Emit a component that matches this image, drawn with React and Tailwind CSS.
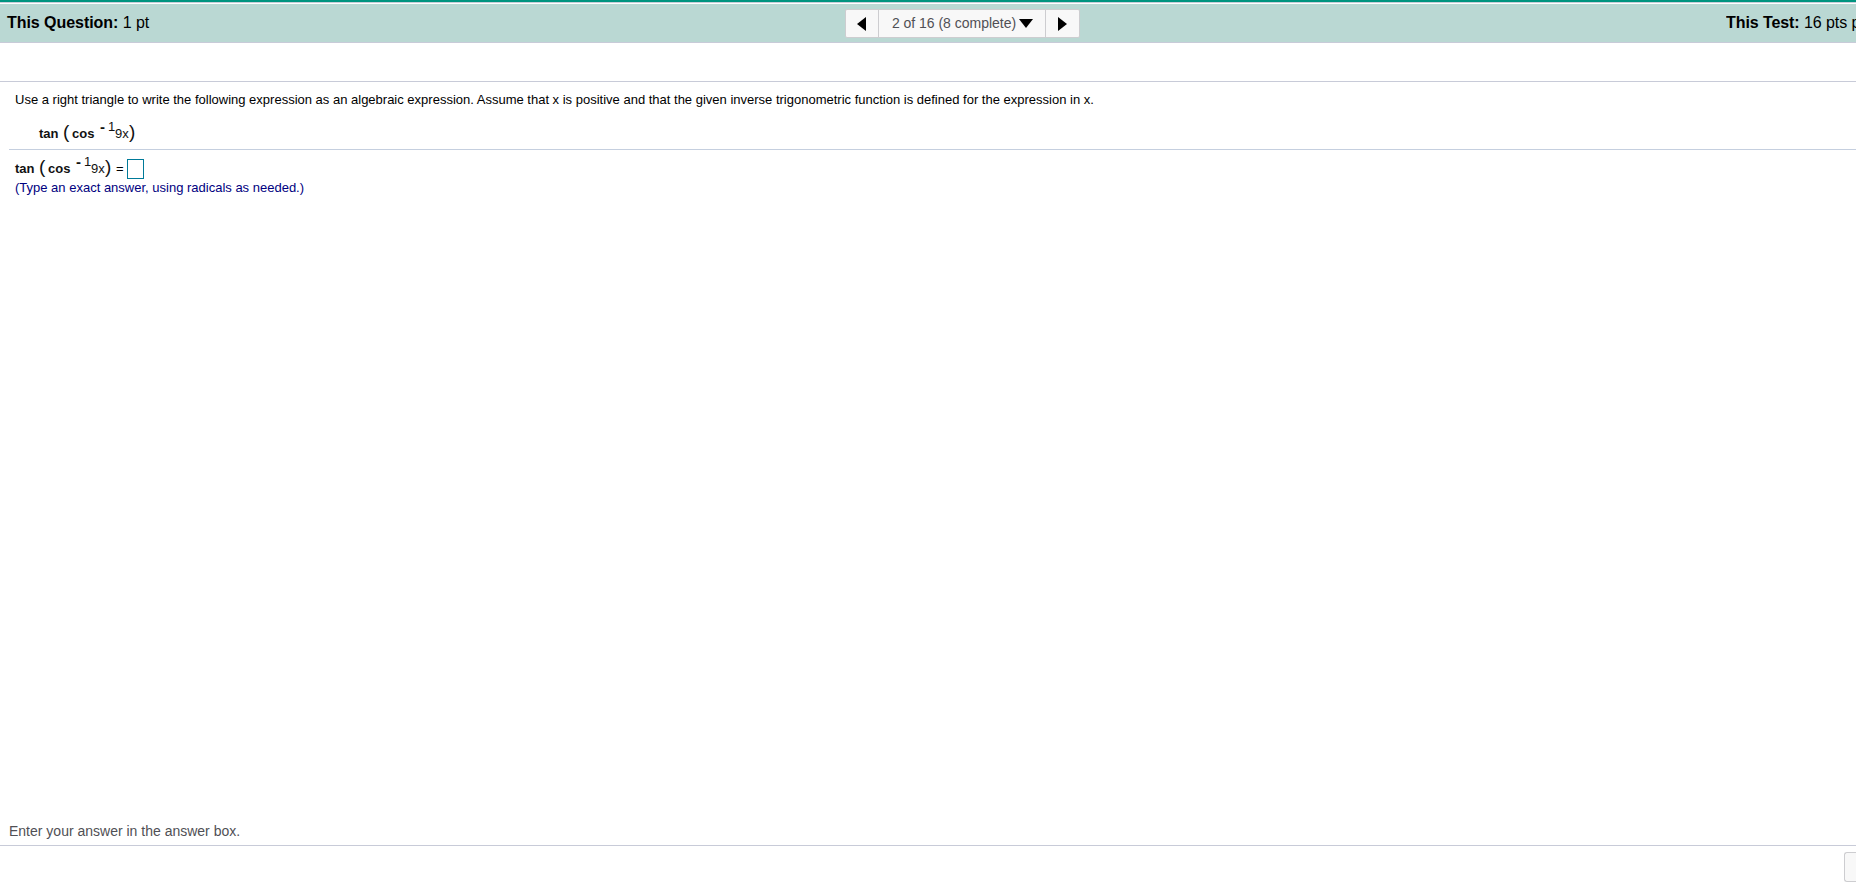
function Expression() {
  return (
    <span className="flex h-6 shrink-0 items-start whitespace-nowrap text-[13px] leading-[26px] text-[#111]">
      <b className="w-[24px]">tan</b>
      <span className="w-[9px] text-[19px] leading-[21px] font-light">(</span>
      <b className="w-[28px]">cos</b>
      <b className="w-[8px] text-[15px] leading-[12px]">-</b>
      <span className="w-[7px] text-[13px] leading-[12px]">1</span>
      <span className="w-[14px]">9x</span>
      <span className="w-[7px] text-[19px] leading-[21px] font-light">)</span>
    </span>
  );
}

function Navigator() {
  return (
    <nav className="flex h-[29px] w-[235px] rounded-xs border border-[#cdcdd0] bg-[#f8f8f8] text-[#505055]">
      <button aria-label="Previous question" className="flex w-[32px] items-center pl-[11px]">
        <svg width="9" height="14" viewBox="0 0 9 14"><path d="M9 0v14L0 7z" fill="#000" /></svg>
      </button>
      <button className="flex w-[168px] items-center border-x border-[#cdcdd0] pl-[10px] text-[14px] leading-5">
        <span className="w-[130px] pb-px tracking-[-0.02px] whitespace-nowrap">2 of 16 (8 complete)</span>
        <svg width="14" height="9" viewBox="0 0 14 9"><path d="M0 0h14L7 9z" fill="#000" /></svg>
      </button>
      <button aria-label="Next question" className="flex w-[33px] items-center pl-[12px]">
        <svg width="9" height="14" viewBox="0 0 9 14"><path d="M0 0v14l9-7z" fill="#000" /></svg>
      </button>
    </nav>
  );
}

export default function App() {
  return (
    <div className="flex h-[888px] w-full flex-col overflow-hidden bg-white font-['Liberation_Sans',Arial,sans-serif] text-black">
      <div className="h-[2px] shrink-0 bg-[#00947f]" />
      <div className="h-px shrink-0 bg-[#c9cdd8]" />
      <header className="mt-px flex h-[39px] shrink-0 items-start border-b border-[#c8cbd8] bg-[#bad8d3] text-[16px] leading-[18px]">
        <div className="w-[845px] pt-[10px] pl-[7px] tracking-[-0.05px]"><b>This Question:</b> 1 pt</div>
        <div className="pt-[5px]"><Navigator /></div>
        <div className="ml-auto w-[130px] overflow-hidden pt-[10px] tracking-[-0.08px] whitespace-nowrap"><b>This Test:</b> 16 pts possible</div>
      </header>
      <div className="h-[39px] shrink-0 border-b border-[#c8cbd8]" />
      <main className="flex flex-1 flex-col">
        <p className="h-[33px] pt-[10px] pl-[15px] text-[13px] leading-4 whitespace-nowrap">
          Use a right triangle to write the following expression as an algebraic expression. Assume that x is positive and that the given inverse trigonometric function is defined for the expression in x.
        </p>
        <div className="flex h-[34px] pt-[6px] pl-[39px]"><Expression /></div>
        <div className="ml-[9px] h-px bg-[#c5cfdf]" />
        <div className="flex h-[30px] pt-[6px] pl-[15px] text-[13px] leading-[26px]">
          <Expression />
          <span className="ml-[4px] w-[11px]">=</span>
          <input aria-label="Answer" className="mt-[3px] h-5 w-[17px] border border-[#007a99] bg-white" />
        </div>
        <p className="pl-[15px] text-[13px] leading-4 text-[#000080]">(Type an exact answer, using radicals as needed.)</p>
        <p className="mt-auto pb-[6px] pl-[9px] text-[14px] leading-4 text-[#505055]">Enter your answer in the answer box.</p>
      </main>
      <footer className="flex h-[43px] shrink-0 justify-end border-t border-[#c8cbd8] pt-[6px]">
        <button aria-label="Open menu" className="h-[30px] w-[12px] rounded-l-[3px] border border-r-0 border-[#cdcdd0] bg-[#f8f8f8]" />
      </footer>
    </div>
  );
}
